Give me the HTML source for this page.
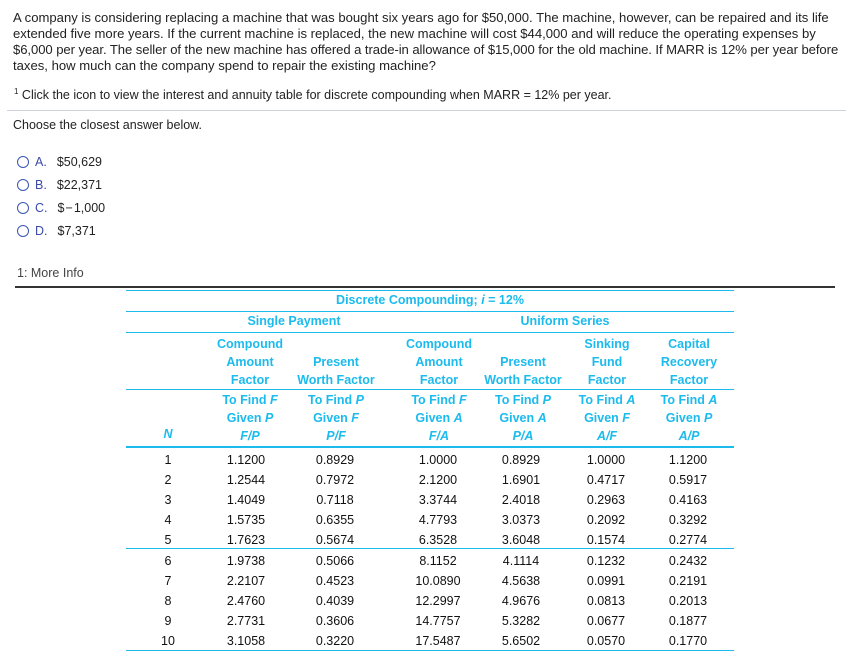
<!DOCTYPE html>
<html><head><meta charset="utf-8"><style>
body{margin:0;width:846px;height:654px;background:#fff;font-family:"Liberation Sans",Arial,sans-serif;color:#222;position:relative;overflow:hidden}
.a{position:absolute;white-space:nowrap}
p.q{position:absolute;left:13px;top:10px;margin:0;font-size:13.1px;line-height:16px;color:#222;white-space:nowrap}
.h{position:absolute;color:#1cbbee;font-weight:bold;font-size:12.5px;text-align:center;width:120px;margin-left:-60px;white-space:nowrap}
.d{position:absolute;font-size:12.5px;text-align:center;width:80px;margin-left:-40px;color:#111}
.l{position:absolute;left:126px;width:608px;height:1px;background:#1cbbee}
.r{display:inline-block;width:10px;height:10px;border:1.5px solid #3a55b8;border-radius:50%;vertical-align:-2px;margin-right:6px}
.o{position:absolute;left:17px;font-size:12.5px}
.o b{font-weight:normal;color:#3a4aa8;margin-right:10px}
</style></head><body>
<p class="q">A company is considering replacing a machine that was bought six years ago for $50,000. The machine, however, can be repaired and its life<br>extended five more years. If the current machine is replaced, the new machine will cost $44,000 and will reduce the operating expenses by<br><span style="letter-spacing:-0.07px">$6,000 per year. The seller of the new machine has offered a trade-in allowance of $15,000 for the old machine. If MARR is 12% per year before</span><br>taxes, how much can the company spend to repair the existing machine?</p>
<div class="a" style="left:14px;top:87px;font-size:12.5px;color:#222"><sup style="font-size:8px">1</sup> Click the icon to view the interest and annuity table for discrete compounding when MARR = 12% per year.</div>
<div class="a" style="left:7px;top:110px;width:839px;height:1px;background:#cdd3dc"></div>
<div class="a" style="left:13px;top:118px;font-size:12.5px">Choose the closest answer below.</div>
<div class="o" style="top:155px"><span class="r"></span><b>A.</b>$50,629</div>
<div class="o" style="top:178px"><span class="r"></span><b>B.</b>$22,371</div>
<div class="o" style="top:201px"><span class="r"></span><b>C.</b>$&#8202;−&#8202;1,000</div>
<div class="o" style="top:224px"><span class="r"></span><b>D.</b>$7,371</div>
<div class="a" style="left:17px;top:266px;font-size:12.5px;color:#444">1: More Info</div>
<div class="a" style="left:15px;top:286px;width:820px;height:2px;background:#333"></div>

<div class="l" style="top:290px"></div>
<div class="l" style="top:311px"></div>
<div class="l" style="top:332px"></div>
<div class="l" style="top:389px"></div>
<div class="l" style="top:446px;height:2px"></div>
<div class="l" style="top:548px"></div>
<div class="l" style="top:650px"></div>

<div class="h" style="left:430px;top:293px;width:240px;margin-left:-120px">Discrete Compounding; <i>i</i> = 12%</div>
<div class="h" style="left:294px;top:314px">Single Payment</div>
<div class="h" style="left:565px;top:314px">Uniform Series</div>

<div class="h" style="left:250px;top:335px;line-height:18px">Compound<br>Amount<br>Factor</div>
<div class="h" style="left:336px;top:353px;line-height:18px">Present<br>Worth Factor</div>
<div class="h" style="left:439px;top:335px;line-height:18px">Compound<br>Amount<br>Factor</div>
<div class="h" style="left:523px;top:353px;line-height:18px">Present<br>Worth Factor</div>
<div class="h" style="left:607px;top:335px;line-height:18px">Sinking<br>Fund<br>Factor</div>
<div class="h" style="left:689px;top:335px;line-height:18px">Capital<br>Recovery<br>Factor</div>

<div class="h" style="left:168px;top:427px"><i>N</i></div>
<div class="h" style="left:250px;top:391px;line-height:18px">To Find <i>F</i><br>Given <i>P</i><br><i>F/P</i></div>
<div class="h" style="left:336px;top:391px;line-height:18px">To Find <i>P</i><br>Given <i>F</i><br><i>P/F</i></div>
<div class="h" style="left:439px;top:391px;line-height:18px">To Find <i>F</i><br>Given <i>A</i><br><i>F/A</i></div>
<div class="h" style="left:523px;top:391px;line-height:18px">To Find <i>P</i><br>Given <i>A</i><br><i>P/A</i></div>
<div class="h" style="left:607px;top:391px;line-height:18px">To Find <i>A</i><br>Given <i>F</i><br><i>A/F</i></div>
<div class="h" style="left:689px;top:391px;line-height:18px">To Find <i>A</i><br>Given <i>P</i><br><i>A/P</i></div>

<div class="d" style="left:168px;top:450px;line-height:20px">1<br>2<br>3<br>4<br>5</div>
<div class="d" style="left:246px;top:450px;line-height:20px">1.1200<br>1.2544<br>1.4049<br>1.5735<br>1.7623</div>
<div class="d" style="left:335px;top:450px;line-height:20px">0.8929<br>0.7972<br>0.7118<br>0.6355<br>0.5674</div>
<div class="d" style="left:438px;top:450px;line-height:20px">1.0000<br>2.1200<br>3.3744<br>4.7793<br>6.3528</div>
<div class="d" style="left:521px;top:450px;line-height:20px">0.8929<br>1.6901<br>2.4018<br>3.0373<br>3.6048</div>
<div class="d" style="left:606px;top:450px;line-height:20px">1.0000<br>0.4717<br>0.2963<br>0.2092<br>0.1574</div>
<div class="d" style="left:688px;top:450px;line-height:20px">1.1200<br>0.5917<br>0.4163<br>0.3292<br>0.2774</div>

<div class="d" style="left:168px;top:551px;line-height:20px">6<br>7<br>8<br>9<br>10</div>
<div class="d" style="left:246px;top:551px;line-height:20px">1.9738<br>2.2107<br>2.4760<br>2.7731<br>3.1058</div>
<div class="d" style="left:335px;top:551px;line-height:20px">0.5066<br>0.4523<br>0.4039<br>0.3606<br>0.3220</div>
<div class="d" style="left:438px;top:551px;line-height:20px">8.1152<br>10.0890<br>12.2997<br>14.7757<br>17.5487</div>
<div class="d" style="left:521px;top:551px;line-height:20px">4.1114<br>4.5638<br>4.9676<br>5.3282<br>5.6502</div>
<div class="d" style="left:606px;top:551px;line-height:20px">0.1232<br>0.0991<br>0.0813<br>0.0677<br>0.0570</div>
<div class="d" style="left:688px;top:551px;line-height:20px">0.2432<br>0.2191<br>0.2013<br>0.1877<br>0.1770</div>
</body></html>
